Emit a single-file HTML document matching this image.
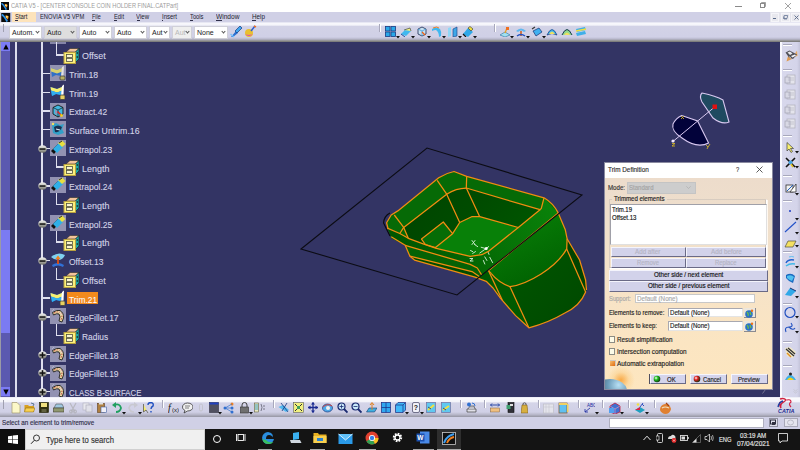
<!DOCTYPE html>
<html><head><meta charset="utf-8">
<style>
*{margin:0;padding:0;box-sizing:border-box}
html,body{width:800px;height:450px;overflow:hidden;background:#333464;font-family:"Liberation Sans",sans-serif}
.a{position:absolute}
.tt{color:#d4d4e8;font-size:9px;white-space:nowrap;line-height:12px;-webkit-text-stroke:0.1px #d4d4e8}
.mn{position:absolute;top:12px;font-size:7.8px;line-height:10px;color:#1a1a2a;white-space:nowrap}
.cb{position:absolute;top:26px;height:13px;background:#fff;border:1px solid #d0d0d8;font-size:7px;line-height:11px;padding-left:2px;color:#222;white-space:nowrap;overflow:hidden}
.cb i{position:absolute;right:2px;top:3px;width:3px;height:3px;border-right:0.8px solid #555;border-bottom:0.8px solid #555;transform:rotate(45deg)}
</style></head><body>
<svg width="0" height="0" style="position:absolute">
<defs>
<linearGradient id="gsil" x1="0" y1="0" x2="0" y2="1"><stop offset="0" stop-color="#f0f0f0"/><stop offset="0.5" stop-color="#b8b8b0"/><stop offset="1" stop-color="#707068"/></linearGradient>
<symbol id="i_expm" viewBox="0 0 9 8"><ellipse cx="4.5" cy="4" rx="4.2" ry="3.7" fill="url(#gsil)"/><rect x="1.5" y="3.3" width="6" height="1.5" fill="#111"/></symbol>
<symbol id="i_expp" viewBox="0 0 9 8"><ellipse cx="4.5" cy="4" rx="4.2" ry="3.7" fill="url(#gsil)"/><rect x="1.5" y="3.3" width="6" height="1.5" fill="#111"/><rect x="3.75" y="1.2" width="1.5" height="5.6" fill="#111"/></symbol>
<symbol id="i_param" viewBox="0 0 17 16"><path d="M3 4L7 0.5H16L12.5 4Z" fill="#f2c49a" stroke="#2a2a2a" stroke-width="0.6"/><path d="M12.5 4L16 0.5V11L12.5 14.5Z" fill="#1fa8a8" stroke="#1a1a1a" stroke-width="0.6"/><circle cx="14.3" cy="5" r="0.8" fill="#111"/><circle cx="14.3" cy="9" r="0.8" fill="#111"/><rect x="1" y="4.5" width="11.5" height="11" fill="#fbf07a" stroke="#b8a040" stroke-width="1"/><rect x="3.5" y="6.5" width="6" height="3" fill="#f8f4d0" stroke="#505040" stroke-width="0.8"/><rect x="3.5" y="10.5" width="6" height="3" fill="#f8f4d0" stroke="#505040" stroke-width="0.8"/></symbol>
<symbol id="i_trim" viewBox="0 0 16 16"><path d="M0.5 3L7 5L13 2.5L11 11L6 10L2 12Z" fill="#2070e0"/><path d="M0.5 3L7 5L13 2.5L12.5 6.5L7 8.5L1 6.5Z" fill="#f4ee70"/><path d="M1 6.5L7 8.5L12 7L11 11L6 10L2 12Z" fill="#30b0f0"/><path d="M12 2L14 0.5L13.5 11H11Z" fill="#fff"/><rect x="10" y="11" width="5" height="4.5" rx="1" fill="#e8d060" stroke="#404040" stroke-width="0.8"/></symbol>
<symbol id="i_trimg" viewBox="0 0 16 16"><rect width="16" height="16" fill="#9292b2"/><path d="M1 3L7 5L13 2.5L11 11L6 10L2 12Z" fill="#3070c8"/><path d="M1 3L7 5L13 2.5L12.5 6.5L7 8.5L1 6.5Z" fill="#d8d070"/><path d="M12 2L14 1L13.5 11H11Z" fill="#e0e0e0"/><rect x="10" y="11" width="5" height="4" rx="1" fill="#b8b060" stroke="#404040" stroke-width="0.8"/></symbol>
<symbol id="i_extract" viewBox="0 0 16 16"><rect width="16" height="16" fill="#9292b2"/><path d="M3 4.5L8 2L13 4.5V11L8 14L3 11Z" fill="#40b8e0" stroke="#1a1a1a" stroke-width="0.9"/><path d="M3 4.5L8 7L13 4.5M8 7V14" stroke="#1a1a1a" stroke-width="0.7" fill="none"/><path d="M5 6L7 8V12L5 10.5Z" fill="#9292b2"/><path d="M7.5 8.5L11 12" stroke="#e02020" stroke-width="1.6"/><circle cx="11.5" cy="12.5" r="1.4" fill="#f0d020"/></symbol>
<symbol id="i_untrim" viewBox="0 0 16 16"><rect width="16" height="16" fill="#9292b2"/><path d="M2 4L6 2L10 4L14 3L12 8L14 12L8 14L3 12Z" fill="#30a0c8"/><path d="M4 6Q8 3 12 6Q10 12 5 11Z" fill="#1a3050"/><circle cx="3" cy="3" r="1.2" fill="#f0e060"/><path d="M6 8L10 9" stroke="#e0f0ff" stroke-width="1.2"/></symbol>
<symbol id="i_extrap" viewBox="0 0 16 16"><rect width="16" height="16" fill="#9292b2"/><path d="M1 11L8 4L10 7L4 14Z" fill="#111"/><path d="M3 9L9 3L13 7L7 13Z" fill="#30b0e8"/><path d="M8 3L12 0.5L15.5 4L12 7Z" fill="#e8e040"/><path d="M9 3L12 1" stroke="#303030" stroke-width="1"/></symbol>
<symbol id="i_offset" viewBox="0 0 16 16"><path d="M1 5Q8 -1 15 3Q13 8 8 8Q4 8 1 5Z" fill="#80d0f0"/><path d="M2 13Q8 9 14 13L13 15Q8 12 3 15Z" fill="#3070d8"/><path d="M8 5V12" stroke="#e05010" stroke-width="1.8"/><path d="M5.5 7L8 3.5L10.5 7Z" fill="#f08020"/></symbol>
<symbol id="i_fillet" viewBox="0 0 16 16"><rect width="16" height="16" fill="#9292b2"/><path d="M2 3L4 1" stroke="#c8c8dc" stroke-width="0.6"/><path d="M2.5 4.5Q7 1.5 10 2.5Q14 5 13.5 10L12 14L9 13Q11 8 9 6Q7 5 3.5 7Z" fill="#e4d49c" stroke="#202020" stroke-width="0.9"/><path d="M4 5Q8 3 10.5 4.5Q13 7 11 12" stroke="#c02030" stroke-width="0.9" fill="none" stroke-dasharray="1.2 1.4"/><path d="M9.5 3.5L12 7" stroke="#f4f0f0" stroke-width="0.8"/></symbol>
</defs></svg>

<!-- title bar -->
<div class="a" style="left:0;top:0;width:800px;height:12px;background:#fff"></div>
<svg class="a" style="left:1px;top:2px" width="8" height="8" viewBox="0 0 9 9"><rect width="9" height="9" fill="#0a0a0a"/><path d="M0.5 1.5Q3 3 6 8.5" stroke="#2a90e8" stroke-width="1.8" fill="none"/><path d="M4 2.5Q6 2 7.5 3.5Q7 6 6 6.5Q5 4.5 4 2.5Z" fill="#f08a20"/><circle cx="5.5" cy="3.8" r="1.1" fill="#ffe070"/></svg>
<div class="a" style="left:11.3px;top:1.14px;font-size:6.9px;line-height:10px;color:#9c9c9c;white-space:nowrap;transform:scaleX(0.825);transform-origin:0 0">CATIA V5 - [CENTER CONSOLE COIN HOLDER FINAL.CATPart]</div>
<div class="a" style="left:735px;top:5.5px;width:7px;height:0.8px;background:#8a8a8a"></div>
<div class="a" style="left:760px;top:3px;width:5px;height:5px;border:0.8px solid #8a8a8a;box-shadow:1px -1px 0 -0.2px #8a8a8a"></div>
<svg class="a" style="left:784px;top:2px" width="8" height="8" viewBox="0 0 8 8"><path d="M1 1L7 7M7 1L1 7" stroke="#8a8a8a" stroke-width="0.8"/></svg>
<!-- menu bar -->
<div class="a" style="left:0;top:12px;width:800px;height:10px;background:#d0d0e6"></div>
<svg class="a" style="left:1px;top:12.5px" width="9.5" height="9" viewBox="0 0 9 9"><rect width="9" height="9" fill="#0a0a0a"/><path d="M0.5 1.5Q3 3 6 8.5" stroke="#2a90e8" stroke-width="1.8" fill="none"/><path d="M4 2.5Q6 2 7.5 3.5Q7 6 6 6.5Q5 4.5 4 2.5Z" fill="#f08a20"/><circle cx="5.5" cy="3.8" r="1.1" fill="#ffe070"/></svg>
<div class="a" style="left:12px;top:12px;width:24px;height:10px;background:#fde3bb"></div>
<div class="a" style="left:14.5px;top:12.39px;font-size:6.9px;line-height:10px;color:#1c1c30;white-space:nowrap;transform:scaleX(0.858);transform-origin:0 0">Start</div>
<div class="a" style="left:39.7px;top:12.39px;font-size:6.9px;line-height:10px;color:#1c1c30;white-space:nowrap;transform:scaleX(0.837);transform-origin:0 0">ENOVIA V5 VPM</div>
<div class="a" style="left:91.9px;top:12.39px;font-size:6.9px;line-height:10px;color:#1c1c30;white-space:nowrap;transform:scaleX(0.783);transform-origin:0 0">File</div>
<div class="a" style="left:113.75px;top:12.39px;font-size:6.9px;line-height:10px;color:#1c1c30;white-space:nowrap;transform:scaleX(0.841);transform-origin:0 0">Edit</div>
<div class="a" style="left:136.25px;top:12.39px;font-size:6.9px;line-height:10px;color:#1c1c30;white-space:nowrap;transform:scaleX(0.883);transform-origin:0 0">View</div>
<div class="a" style="left:161.9px;top:12.39px;font-size:6.9px;line-height:10px;color:#1c1c30;white-space:nowrap;transform:scaleX(0.869);transform-origin:0 0">Insert</div>
<div class="a" style="left:189.5px;top:12.39px;font-size:6.9px;line-height:10px;color:#1c1c30;white-space:nowrap;transform:scaleX(0.838);transform-origin:0 0">Tools</div>
<div class="a" style="left:216px;top:12.39px;font-size:6.9px;line-height:10px;color:#1c1c30;white-space:nowrap;transform:scaleX(0.958);transform-origin:0 0">Window</div>
<div class="a" style="left:252px;top:12.39px;font-size:6.9px;line-height:10px;color:#1c1c30;white-space:nowrap;transform:scaleX(0.916);transform-origin:0 0">Help</div>
<div class="a" style="left:770px;top:12px;width:30px;height:10px;background:#e4e4ec"></div>
<div class="a" style="left:770.5px;top:13px;width:8.5px;height:8.5px;background:#e8e8ee;border:0.5px solid #f4f4f8"></div>
<div class="a" style="left:781px;top:13px;width:8.5px;height:8.5px;background:#e8e8ee;border:0.5px solid #f4f4f8"></div>
<div class="a" style="left:791px;top:13px;width:9px;height:8.5px;background:#e8e8ee;border:0.5px solid #f4f4f8"></div>
<div class="a" style="left:773px;top:18px;width:3px;height:1.2px;background:#5a6a88"></div>
<svg class="a" style="left:782.5px;top:14px" width="6" height="6" viewBox="0 0 6 6"><path d="M1.5 1.5H5V4.5H1.5Z" fill="none" stroke="#6a7a98" stroke-width="0.8" transform="skewX(-12)"/><path d="M1 2.5V5H4" fill="none" stroke="#6a7a98" stroke-width="0.8"/></svg>
<svg class="a" style="left:793.5px;top:15px" width="5" height="5" viewBox="0 0 5 5"><path d="M0.5 0.5L4.5 4.5M4.5 0.5L0.5 4.5" stroke="#5a6a88" stroke-width="0.9"/></svg>
<div class="a" style="left:14.8px;top:20.2px;width:3px;height:0.7px;background:#30304a"></div>
<div class="a" style="left:92px;top:20.2px;width:2.8px;height:0.7px;background:#30304a"></div>
<div class="a" style="left:114px;top:20.2px;width:3px;height:0.7px;background:#30304a"></div>
<div class="a" style="left:136.5px;top:20.2px;width:3.5px;height:0.7px;background:#30304a"></div>
<div class="a" style="left:162px;top:20.2px;width:1.2px;height:0.7px;background:#30304a"></div>
<div class="a" style="left:189.5px;top:20.2px;width:3.5px;height:0.7px;background:#30304a"></div>
<div class="a" style="left:216px;top:20.2px;width:5.5px;height:0.7px;background:#30304a"></div>
<div class="a" style="left:252px;top:20.2px;width:3.5px;height:0.7px;background:#30304a"></div>
<!-- toolbar -->
<div class="a" style="left:0;top:22px;width:800px;height:20px;background:linear-gradient(#d6d6ea 0,#f8f8fc 1px,#f4f4fa 3px,#d2d2e6 4.5px,#d0d0e6 15px,#b8b8cc 17px,#8c8c8a 19px,#707070 20px)"></div>

<div class="a" style="left:3px;top:24px;width:1px;height:8px;background:#a0a0b0"></div>
<div class="cb" style="left:9px;width:33px">Autom.<i></i></div>
<div class="cb" style="left:44px;width:33px;background:#dedede">Auto<i></i></div>
<div class="cb" style="left:79px;width:33px">Auto<i></i></div>
<div class="cb" style="left:114px;width:33px">Auto<i></i></div>
<div class="cb" style="left:149px;width:21px">Aut<i></i></div>
<div class="cb" style="left:172px;width:20px;background:#efefef;color:#b8b8b8">Aut<i></i></div>
<div class="cb" style="left:194px;width:34px">None<i></i></div>

<!-- tree -->
<div class="a" style="left:0;top:41px;width:1px;height:356px;background:#9a9aa6"></div>
<div class="a" style="left:1px;top:41px;width:9px;height:356px;background:#5b59b0"></div>
<div class="a" style="left:1px;top:230px;width:9px;height:103px;background:#7b7bf2"></div>
<div class="a" style="left:1px;top:42px;width:9px;height:9px;background:#7b7bf5"></div>
<svg class="a" style="left:3px;top:44px" width="6" height="6" viewBox="0 0 6 6"><path d="M3 0.3L5.7 5.5H0.3Z" fill="#000"/></svg>
<div class="a" style="left:1px;top:387px;width:9px;height:9px;background:#7b7bf5"></div>
<svg class="a" style="left:3px;top:389px" width="6" height="6" viewBox="0 0 6 6"><path d="M3 5.7L5.7 0.5H0.3Z" fill="#000"/></svg>
<div class="a" style="left:10px;top:41px;width:5px;height:356px;background:#38376c"></div>
<div class="a" style="left:15px;top:41px;width:1.5px;height:356px;background:#dcdcec"></div>
<div class="a" style="left:50px;top:41px;width:16px;height:2.5px;background:#9a9ab8;opacity:0.8"></div>
<div class="a" style="left:41px;top:41px;width:2px;height:356px;background:#dedeee"></div>
<div class="a" style="left:55.5px;top:41.0px;width:1.5px;height:13.9px;background:#dedeee"></div>
<div class="a" style="left:55.5px;top:54.1px;width:9px;height:1.5px;background:#dedeee"></div>
<svg class="a" style="left:63px;top:47.5px" width="17" height="16"><use href="#i_param"/></svg>
<div class="a tt" style="left:82px;top:50.3px;transform:scaleX(0.990);transform-origin:0 0;">Offset</div>
<div class="a" style="left:43px;top:72.8px;width:7px;height:1.5px;background:#dedeee"></div>
<svg class="a" style="left:50px;top:65.1px" width="16" height="16"><use href="#i_trimg"/></svg>
<div class="a tt" style="left:68.8px;top:69.0px;transform:scaleX(0.968);transform-origin:0 0;">Trim.18</div>
<div class="a" style="left:43px;top:91.5px;width:7px;height:1.5px;background:#dedeee"></div>
<svg class="a" style="left:50px;top:83.8px" width="16" height="16"><use href="#i_trim"/></svg>
<div class="a tt" style="left:68.8px;top:87.7px;transform:scaleX(0.968);transform-origin:0 0;">Trim.19</div>
<div class="a" style="left:43px;top:110.2px;width:7px;height:1.5px;background:#dedeee"></div>
<svg class="a" style="left:50px;top:102.5px" width="16" height="16"><use href="#i_extract"/></svg>
<div class="a tt" style="left:68.8px;top:106.4px;transform:scaleX(0.940);transform-origin:0 0;">Extract.42</div>
<div class="a" style="left:43px;top:128.9px;width:7px;height:1.5px;background:#dedeee"></div>
<svg class="a" style="left:50px;top:121.2px" width="16" height="16"><use href="#i_untrim"/></svg>
<div class="a tt" style="left:68.8px;top:125.1px;transform:scaleX(0.973);transform-origin:0 0;">Surface Untrim.16</div>
<div class="a" style="left:43px;top:147.6px;width:7px;height:1.5px;background:#dedeee"></div>
<svg class="a" style="left:50px;top:139.9px" width="16" height="16"><use href="#i_extrap"/></svg>
<div class="a tt" style="left:68.8px;top:143.8px;transform:scaleX(0.952);transform-origin:0 0;">Extrapol.23</div>
<svg class="a" style="left:38px;top:144.6px" width="9" height="8"><use href="#i_expm"/></svg>
<div class="a" style="left:55.5px;top:155.9px;width:1.5px;height:11.2px;background:#dedeee"></div>
<div class="a" style="left:55.5px;top:166.3px;width:9px;height:1.5px;background:#dedeee"></div>
<svg class="a" style="left:63px;top:159.7px" width="17" height="16"><use href="#i_param"/></svg>
<div class="a tt" style="left:82px;top:162.5px;transform:scaleX(0.994);transform-origin:0 0;">Length</div>
<div class="a" style="left:43px;top:185.1px;width:7px;height:1.5px;background:#dedeee"></div>
<svg class="a" style="left:50px;top:177.4px" width="16" height="16"><use href="#i_extrap"/></svg>
<div class="a tt" style="left:68.8px;top:181.3px;transform:scaleX(0.952);transform-origin:0 0;">Extrapol.24</div>
<svg class="a" style="left:38px;top:182.1px" width="9" height="8"><use href="#i_expm"/></svg>
<div class="a" style="left:55.5px;top:193.4px;width:1.5px;height:11.2px;background:#dedeee"></div>
<div class="a" style="left:55.5px;top:203.8px;width:9px;height:1.5px;background:#dedeee"></div>
<svg class="a" style="left:63px;top:197.2px" width="17" height="16"><use href="#i_param"/></svg>
<div class="a tt" style="left:82px;top:200.0px;transform:scaleX(0.994);transform-origin:0 0;">Length</div>
<div class="a" style="left:43px;top:222.5px;width:7px;height:1.5px;background:#dedeee"></div>
<svg class="a" style="left:50px;top:214.8px" width="16" height="16"><use href="#i_extrap"/></svg>
<div class="a tt" style="left:68.8px;top:218.7px;transform:scaleX(0.952);transform-origin:0 0;">Extrapol.25</div>
<svg class="a" style="left:38px;top:219.5px" width="9" height="8"><use href="#i_expm"/></svg>
<div class="a" style="left:55.5px;top:230.8px;width:1.5px;height:11.2px;background:#dedeee"></div>
<div class="a" style="left:55.5px;top:241.2px;width:9px;height:1.5px;background:#dedeee"></div>
<svg class="a" style="left:63px;top:234.6px" width="17" height="16"><use href="#i_param"/></svg>
<div class="a tt" style="left:82px;top:237.4px;transform:scaleX(0.994);transform-origin:0 0;">Length</div>
<div class="a" style="left:43px;top:259.9px;width:7px;height:1.5px;background:#dedeee"></div>
<svg class="a" style="left:50px;top:252.2px" width="16" height="16"><use href="#i_offset"/></svg>
<div class="a tt" style="left:68.8px;top:256.1px;transform:scaleX(0.945);transform-origin:0 0;">Offset.13</div>
<svg class="a" style="left:38px;top:256.9px" width="9" height="8"><use href="#i_expm"/></svg>
<div class="a" style="left:55.5px;top:268.2px;width:1.5px;height:11.2px;background:#dedeee"></div>
<div class="a" style="left:55.5px;top:278.6px;width:9px;height:1.5px;background:#dedeee"></div>
<svg class="a" style="left:63px;top:272.0px" width="17" height="16"><use href="#i_param"/></svg>
<div class="a tt" style="left:82px;top:274.8px;transform:scaleX(0.990);transform-origin:0 0;">Offset</div>
<div class="a" style="left:43px;top:297.3px;width:7px;height:1.5px;background:#dedeee"></div>
<svg class="a" style="left:50px;top:289.6px" width="16" height="16"><use href="#i_trim"/></svg>
<div class="a" style="left:67px;top:292.1px;width:31px;height:12px;background:#f28a1c"></div>
<div class="a tt" style="left:68.8px;top:293.5px;color:#fff;transform:scaleX(0.931);transform-origin:0 0;">Trim.21</div>
<div class="a" style="left:43px;top:316.1px;width:7px;height:1.5px;background:#dedeee"></div>
<svg class="a" style="left:50px;top:308.4px" width="16" height="16"><use href="#i_fillet"/></svg>
<div class="a tt" style="left:68.8px;top:312.3px;transform:scaleX(0.944);transform-origin:0 0;">EdgeFillet.17</div>
<svg class="a" style="left:38px;top:313.1px" width="9" height="8"><use href="#i_expm"/></svg>
<div class="a" style="left:55.5px;top:324.4px;width:1.5px;height:11.2px;background:#dedeee"></div>
<div class="a" style="left:55.5px;top:334.8px;width:9px;height:1.5px;background:#dedeee"></div>
<svg class="a" style="left:63px;top:328.2px" width="17" height="16"><use href="#i_param"/></svg>
<div class="a tt" style="left:82px;top:331.0px;transform:scaleX(0.932);transform-origin:0 0;">Radius</div>
<div class="a" style="left:43px;top:353.5px;width:7px;height:1.5px;background:#dedeee"></div>
<svg class="a" style="left:50px;top:345.8px" width="16" height="16"><use href="#i_fillet"/></svg>
<div class="a tt" style="left:68.8px;top:349.7px;transform:scaleX(0.944);transform-origin:0 0;">EdgeFillet.18</div>
<svg class="a" style="left:38px;top:350.5px" width="9" height="8"><use href="#i_expp"/></svg>
<div class="a" style="left:43px;top:372.2px;width:7px;height:1.5px;background:#dedeee"></div>
<svg class="a" style="left:50px;top:364.5px" width="16" height="16"><use href="#i_fillet"/></svg>
<div class="a tt" style="left:68.8px;top:368.4px;transform:scaleX(0.944);transform-origin:0 0;">EdgeFillet.19</div>
<svg class="a" style="left:38px;top:369.2px" width="9" height="8"><use href="#i_expp"/></svg>
<div class="a" style="left:43px;top:390.9px;width:7px;height:1.5px;background:#dedeee"></div>
<svg class="a" style="left:50px;top:383.2px" width="16" height="16"><use href="#i_fillet"/></svg>
<div class="a tt" style="left:68.8px;top:387.1px;transform:scaleX(0.866);transform-origin:0 0;">CLASS B-SURFACE</div>
<svg class="a" style="left:38px;top:387.9px" width="9" height="8"><use href="#i_expp"/></svg>
<!-- viewport 3D -->
<svg class="a" style="left:0;top:0" width="800" height="450" viewBox="0 0 800 450">
<defs>
<linearGradient id="gneck" x1="0.3" y1="0" x2="0.8" y2="1"><stop offset="0" stop-color="#088008"/><stop offset="1" stop-color="#005e00"/></linearGradient>
<linearGradient id="gfront" x1="0" y1="0" x2="1" y2="1"><stop offset="0" stop-color="#005600"/><stop offset="1" stop-color="#004800"/></linearGradient>
<linearGradient id="grim" x1="1" y1="0" x2="0" y2="0.3"><stop offset="0" stop-color="#0a840a"/><stop offset="0.5" stop-color="#067006"/><stop offset="1" stop-color="#005600"/></linearGradient>
<linearGradient id="gwall" x1="0" y1="0" x2="1" y2="0.3"><stop offset="0" stop-color="#004400"/><stop offset="0.6" stop-color="#004c00"/><stop offset="1" stop-color="#005400"/></linearGradient>
</defs>
<!-- silhouette base (rim top color) -->
<path d="M388.1 229L386.6 222.8L391.2 215L397.8 210.9L438.7 177.8Q446 173 454 171.5L466.7 176.3L544 197.8Q553 203 558.2 212.9L565.3 229.8L567.1 238.7L579.6 260L585.6 280L586.5 290Q580 306 564.4 313.3Q548 323 528.9 327.8L515.6 315.6L500.4 298.2L493 288L486.2 281.3L475 277.2L414.5 260.1L409.9 256.2L405.2 245.3L391.2 238.3Z" fill="#066a06"/>
<!-- inner walls -->
<path d="M403.7 227.4L446.7 194.2Q456 188 466.3 188L540 209.7L518.3 227.5L479.7 216.7L471.7 216.7L459.7 222.5L452.6 233.7L443.3 222L421.5 239.1L425.4 244.5L408.3 238.3Z" fill="url(#gwall)"/>
<!-- floor -->
<path d="M452.6 233.7L459.7 222.5L471.7 216.7L479.7 216.7L518.3 227.5L488.9 251.1L481.8 254.7L470.2 256.4L436.3 248.4L435.5 247.6Z" fill="#088008"/>
<!-- step -->
<path d="M443.3 222L452.6 233.7L435.5 247.6L425.4 244.5L421.5 239.1Z" fill="#066c06"/>
<!-- front rim band a-b -->
<path d="M387.3 228.2L399.8 233.5L408.3 238.3L423.1 243.8L436.3 248.4L470.2 256.4L481.8 254.7L488.9 251.1L518.3 227.5L540 209.7L541.3 208.4L544 197.8L558.2 212.9L488.3 270.8L481.8 275.1L477.3 268L470.2 264.4L405.2 245.3L391.2 236.8Z" fill="url(#grim)"/>
<!-- band b-c -->
<path d="M391.2 236.8L405.2 245.3L470.2 264.4L477.3 268L481.8 275.1L480 276.9L472 271.6L409.9 256.2L405.2 245.3Z" fill="#056205"/>
<!-- band c-d -->
<path d="M409.9 256.2L472 271.6L480 276.9L486.2 281.3L475 277.2L414.5 260.1Z" fill="#004c00"/>
<!-- neck top -->
<path d="M558.2 212.9L565.3 229.8L567.1 238.7L566.7 248.9Q562 258 551.1 268.9Q533 280 510 286.7Q498 282 491.1 273.3L488.3 270.8Z" fill="url(#gneck)"/>
<!-- neck left face -->
<path d="M491.1 273.3Q498 282 510 286.7L528.9 327.8L515.6 315.6L500.4 298.2L493 288L486.2 281.3L480 276.9L481.8 275.1L488.3 270.8Z" fill="#005a00"/>
<!-- front face -->
<path d="M510 286.7C528 284 556 268 566.7 248.9L585.6 292Q580 306 564.4 313.3Q548 323 528.9 327.8Z" fill="url(#gfront)"/>
<!-- right side face -->
<path d="M566.7 248.9L567.1 238.7L579.6 260L585.6 280L586.5 290L585.6 292Z" fill="#004400"/>
<!-- edges -->
<g fill="none" stroke="#f28c12" stroke-width="1.25" stroke-linejoin="round">
<path d="M388.1 229L386.6 222.8L391.2 215L397.8 210.9L438.7 177.8Q446 173 454 171.5L466.7 176.3L544 197.8Q553 203 558.2 212.9L565.3 229.8L567.1 238.7L566.7 248.9"/>
<path d="M566.7 248.9L585.6 292Q580 306 564.4 313.3Q548 323 528.9 327.8L515.6 315.6L500.4 298.2L493 288L486.2 281.3L475 277.2L414.5 260.1L409.9 256.2L405.2 245.3L391.2 236.8"/>
<path d="M466.7 176.3L466.3 188L479.7 216.7"/>
<path d="M437.2 180.4L446.7 194.2L459.7 222.5"/>
<path d="M394.3 215L403.7 227.4L408.3 238.3"/>
<path d="M399.8 233.5L403.7 227.4L446.7 194.2Q456 188 466.3 188L540 209.7L541.3 208.4L544 197.8"/>
<path d="M452.6 233.7L459.7 222.5L471.7 216.7L479.7 216.7L518.3 227.5L540 209.7"/>
<path d="M558.2 212.9L488.3 270.8L491.1 273.3"/>
<path d="M387.3 228.2L399.8 233.5L408.3 238.3L423.1 243.8L436.3 248.4L470.2 256.4L481.8 254.7L488.9 251.1L518.3 227.5"/>
<path d="M443.3 222L452.6 233.7L435.5 247.6L425.4 244.5L421.5 239.1Z"/>
<path d="M405.2 245.3L470.2 264.4L477.3 268L481.8 275.1"/>
<path d="M409.9 256.2L472 271.6L480 276.9"/>
<path d="M491.1 273.3Q498 282 510 286.7C528 284 556 268 566.7 248.9"/>
<path d="M510 286.7L528.9 327.8"/>
<path d="M488.9 271.6L502.2 300"/>
<path d="M567.1 238.7L579.6 260L585.6 280L586.5 290"/>
</g>
<!-- dark lip left -->
<path d="M390 213Q384 216 383.6 223L387 230L390 236" fill="none" stroke="#0a0a10" stroke-width="1.2"/>
<!-- plane -->
<path d="M301 249L427 148L582 195L457 295Z" fill="none" stroke="#0c0c14" stroke-width="1.1"/>
<!-- axis glyph -->
<g stroke="#d8f0d8" stroke-width="0.9" fill="none" stroke-linecap="round">
<path d="M472 240.5L475 244.5M475 240.5L472 244.5"/><path d="M474.5 244.5L477.7 246.6"/>
<path d="M481.2 247.3L486 248.6L488.7 246.6"/><path d="M486 248.6L479.8 253"/>
<path d="M470.5 250.5L472.7 251.6"/><path d="M472.7 253.4L475.5 251.6"/>
<path d="M470 258.5H473L470 261H473"/>
<path d="M484.8 256.9L486.9 260.5M489.8 257.3L492.6 262.6M483.4 260.5L484.8 264M488.3 252.6L489 254.4"/>
</g>
<circle cx="486.2" cy="248.6" r="1.5" fill="#fff"/>
<!-- compass -->
<path d="M702 93Q716 96 723 100L729 122Q722 125 713 118L702 102Q699 96 702 93Z" fill="#1f4a60" stroke="#d8c8f0" stroke-width="1.1"/>
<path d="M681.7 115.5L697.6 121L708.6 143Q697 149 682 138Q671 131 673 124Q676 118 681.7 115.5Z" fill="#02023a" stroke="#d8c8f0" stroke-width="1.1"/>
<path d="M673.5 141L714.6 107" stroke="#d8c8f0" stroke-width="1" fill="none"/>
<rect x="712.5" y="104.5" width="4.5" height="4.5" fill="#e01010"/>
<circle cx="673" cy="141" r="1.6" fill="#f0e8ff"/>
<g stroke="#e0c020" stroke-width="0.8" fill="none"><path d="M681 116L684 119M684 116L681 119"/><path d="M706 145L708 147L710 144M708 147L707 149"/><path d="M672 143.5H675L672 146H675"/></g>
</svg>

<!-- dialog -->
<div class="a" style="left:603.5px;top:161.5px;width:169px;height:228px;border:1px solid #8a8aa0;background:linear-gradient(#ecdbcb 0px,#efdfcc 60px,#f6e3c8 120px,#fbe5c2 180px,#fde6bf 228px)"></div>
<div class="a" style="left:604.5px;top:162.5px;width:167px;height:15px;background:#fff"></div>
<div class="a" style="left:608.2px;top:164.82px;font-size:6.6px;line-height:10px;color:#333;white-space:nowrap;-webkit-text-stroke:0.15px #333;transform:scaleX(0.965);transform-origin:0 0;">Trim Definition</div>
<div class="a" style="left:735.5px;top:164.82px;font-size:6.6px;line-height:10px;color:#333;white-space:nowrap;-webkit-text-stroke:0.15px #333;transform:scaleX(0.872);transform-origin:0 0;">?</div>
<svg class="a" style="left:756px;top:166px" width="7" height="7" viewBox="0 0 7 7"><path d="M0.5 0.5L6.5 6.5M6.5 0.5L0.5 6.5" stroke="#333" stroke-width="0.8"/></svg>
<div class="a" style="left:608.2px;top:183.32px;font-size:6.6px;line-height:10px;color:#333;white-space:nowrap;-webkit-text-stroke:0.15px #333;transform:scaleX(0.932);transform-origin:0 0;">Mode:</div>
<div class="a" style="left:627px;top:182px;width:68.5px;height:11.5px;background:#cdcdcd;border:0.5px solid #c4c4c4"></div>
<div class="a" style="left:629.3px;top:183.32px;font-size:6.6px;line-height:10px;color:#a4a4a4;white-space:nowrap;-webkit-text-stroke:0.15px #a4a4a4;transform:scaleX(0.915);transform-origin:0 0;">Standard</div>
<svg class="a" style="left:686px;top:186px" width="5" height="3" viewBox="0 0 5 3"><path d="M0.3 0.3L2.5 2.5L4.7 0.3" stroke="#aaa" stroke-width="0.6" fill="none"/></svg>
<div class="a" style="left:608.5px;top:198.5px;width:158.5px;height:70px;border:1px solid #d8ccc0;border-right-color:#fff;border-bottom-color:#fff;box-shadow:inset -1px -1px 0 #d0c4b8,1px 1px 0 #fff8f0"></div>
<div class="a" style="left:612px;top:195px;width:55px;height:7px;background:#eedecc"></div>
<div class="a" style="left:614.4px;top:193.62px;font-size:6.6px;line-height:10px;color:#222;white-space:nowrap;-webkit-text-stroke:0.15px #222;transform:scaleX(0.928);transform-origin:0 0;">Trimmed elements</div>
<div class="a" style="left:609.5px;top:204px;width:157px;height:41px;background:#fff;border:1px solid #a0a0a8;border-right-color:#e0e0e0;border-bottom-color:#e0e0e0"></div>
<div class="a" style="left:611.6px;top:204.72px;font-size:6.6px;line-height:10px;color:#111;white-space:nowrap;-webkit-text-stroke:0.15px #111;transform:scaleX(0.904);transform-origin:0 0;">Trim.19</div>
<div class="a" style="left:611.6px;top:212.52px;font-size:6.6px;line-height:10px;color:#111;white-space:nowrap;-webkit-text-stroke:0.15px #111;transform:scaleX(0.915);transform-origin:0 0;">Offset.13</div>
<div class="a" style="left:610.5px;top:246.5px;width:75px;height:10.5px;background:#d2d2ea;border:1px solid #f4f4fc;border-right:1.5px solid #6a6a86;border-bottom:1.5px solid #6a6a86"></div><div class="a" style="left:635.3px;top:247.12px;font-size:6.6px;line-height:10px;color:#b4b4c4;white-space:nowrap;-webkit-text-stroke:0.15px #b4b4c4;transform:scaleX(0.948);transform-origin:0 0;">Add after</div>
<div class="a" style="left:686px;top:246.5px;width:80px;height:10.5px;background:#d2d2ea;border:1px solid #f4f4fc;border-right:1.5px solid #6a6a86;border-bottom:1.5px solid #6a6a86"></div><div class="a" style="left:710.5px;top:247.12px;font-size:6.6px;line-height:10px;color:#b4b4c4;white-space:nowrap;-webkit-text-stroke:0.15px #b4b4c4;transform:scaleX(0.957);transform-origin:0 0;">Add before</div>
<div class="a" style="left:610.5px;top:257.8px;width:75px;height:10.5px;background:#d2d2ea;border:1px solid #f4f4fc;border-right:1.5px solid #6a6a86;border-bottom:1.5px solid #6a6a86"></div><div class="a" style="left:637.0px;top:257.52px;font-size:6.6px;line-height:10px;color:#b4b4c4;white-space:nowrap;-webkit-text-stroke:0.15px #b4b4c4;transform:scaleX(0.895);transform-origin:0 0;">Remove</div>
<div class="a" style="left:686px;top:257.8px;width:80px;height:10.5px;background:#d2d2ea;border:1px solid #f4f4fc;border-right:1.5px solid #6a6a86;border-bottom:1.5px solid #6a6a86"></div><div class="a" style="left:715.3px;top:257.52px;font-size:6.6px;line-height:10px;color:#b4b4c4;white-space:nowrap;-webkit-text-stroke:0.15px #b4b4c4;transform:scaleX(0.884);transform-origin:0 0;">Replace</div>
<div class="a" style="left:609.3px;top:270px;width:158.5px;height:10.5px;background:#d2d2ea;border:1px solid #f4f4fc;border-right:1.5px solid #6a6a86;border-bottom:1.5px solid #6a6a86"></div><div class="a" style="left:653.8px;top:269.92px;font-size:6.6px;line-height:10px;color:#111;white-space:nowrap;-webkit-text-stroke:0.15px #111;transform:scaleX(0.941);transform-origin:0 0;">Other side / next element</div>
<div class="a" style="left:609.3px;top:281.3px;width:158.5px;height:10.5px;background:#d2d2ea;border:1px solid #f4f4fc;border-right:1.5px solid #6a6a86;border-bottom:1.5px solid #6a6a86"></div><div class="a" style="left:647.8px;top:280.82px;font-size:6.6px;line-height:10px;color:#111;white-space:nowrap;-webkit-text-stroke:0.15px #111;transform:scaleX(0.947);transform-origin:0 0;">Other side / previous element</div>
<div class="a" style="left:609.3px;top:293.52px;font-size:6.6px;line-height:10px;color:#a8a8a8;white-space:nowrap;-webkit-text-stroke:0.15px #a8a8a8;transform:scaleX(0.882);transform-origin:0 0;">Support:</div>
<div class="a" style="left:635.3px;top:293.8px;width:120px;height:9.6px;background:#fff;border:1px solid #c8c8c8"></div>
<div class="a" style="left:637.3px;top:293.52px;font-size:6.6px;line-height:10px;color:#a8a8a8;white-space:nowrap;-webkit-text-stroke:0.15px #a8a8a8;transform:scaleX(0.948);transform-origin:0 0;">Default (None)</div>
<div class="a" style="left:609.3px;top:307.52px;font-size:6.6px;line-height:10px;color:#222;white-space:nowrap;-webkit-text-stroke:0.15px #222;transform:scaleX(0.915);transform-origin:0 0;">Elements to remove:</div>
<div class="a" style="left:668.2px;top:307.7px;width:75px;height:9.8px;background:#fff;border:1px solid #a8a8b0;border-right-color:#e4e4e4;border-bottom-color:#e4e4e4"></div>
<div class="a" style="left:670px;top:307.52px;font-size:6.6px;line-height:10px;color:#222;white-space:nowrap;-webkit-text-stroke:0.15px #222;transform:scaleX(0.920);transform-origin:0 0;">Default (None)</div>
<div class="a" style="left:609.3px;top:320.82px;font-size:6.6px;line-height:10px;color:#222;white-space:nowrap;-webkit-text-stroke:0.15px #222;transform:scaleX(0.909);transform-origin:0 0;">Elements to keep:</div>
<div class="a" style="left:668.2px;top:321.3px;width:75px;height:9.8px;background:#fff;border:1px solid #a8a8b0;border-right-color:#e4e4e4;border-bottom-color:#e4e4e4"></div>
<div class="a" style="left:670px;top:321.12px;font-size:6.6px;line-height:10px;color:#222;white-space:nowrap;-webkit-text-stroke:0.15px #222;transform:scaleX(0.920);transform-origin:0 0;">Default (None)</div>
<div class="a" style="left:743.5px;top:307.7px;width:12px;height:10.5px;background:#ece6dc;border-right:1px solid #8a8a90;border-bottom:1px solid #8a8a90"></div>
<svg class="a" style="left:744px;top:308.7px" width="10" height="9" viewBox="0 0 10 9"><circle cx="5" cy="5" r="3.8" fill="#2a70c8"/><path d="M3 3Q5 5 4 7M6 3L7 6" stroke="#70c040" stroke-width="1.2" fill="none"/><circle cx="8" cy="1.8" r="1.2" fill="#f07010"/></svg>
<div class="a" style="left:743.5px;top:321.3px;width:12px;height:10.5px;background:#ece6dc;border-right:1px solid #8a8a90;border-bottom:1px solid #8a8a90"></div>
<svg class="a" style="left:744px;top:322.3px" width="10" height="9" viewBox="0 0 10 9"><circle cx="5" cy="5" r="3.8" fill="#2a70c8"/><path d="M3 3Q5 5 4 7M6 3L7 6" stroke="#70c040" stroke-width="1.2" fill="none"/><circle cx="8" cy="1.8" r="1.2" fill="#f07010"/></svg>
<div class="a" style="left:609.3px;top:336px;width:6.2px;height:6.6px;background:#fdfbe8;border:0.7px solid #8c8c84"></div>
<div class="a" style="left:617.3px;top:334.82px;font-size:6.6px;line-height:10px;color:#222;white-space:nowrap;-webkit-text-stroke:0.15px #222;transform:scaleX(0.953);transform-origin:0 0;">Result simplification</div>
<div class="a" style="left:609.3px;top:348.3px;width:6.2px;height:6.6px;background:#fdfbe8;border:0.7px solid #8c8c84"></div>
<div class="a" style="left:617.3px;top:347.12px;font-size:6.6px;line-height:10px;color:#222;white-space:nowrap;-webkit-text-stroke:0.15px #222;transform:scaleX(0.969);transform-origin:0 0;">Intersection computation</div>
<div class="a" style="left:609.5px;top:360.3px;width:6px;height:6px;background:#fff4e4;border:0.5px solid #d0c8c0"></div>
<div class="a" style="left:610.3px;top:361.1px;width:4.5px;height:4.5px;background:linear-gradient(135deg,#f8c070,#e06a10)"></div>
<div class="a" style="left:617.3px;top:359.12px;font-size:6.6px;line-height:10px;color:#222;white-space:nowrap;-webkit-text-stroke:0.15px #222;transform:scaleX(0.973);transform-origin:0 0;">Automatic extrapolation</div>
<div class="a" style="left:604.5px;top:362px;width:40px;height:26.5px;overflow:hidden"><div style="position:absolute;left:2px;top:4px;width:28px;height:28px;border-radius:50%;background:radial-gradient(circle at 50% 50%,rgba(248,160,50,0.85) 0,rgba(250,200,120,0.4) 40%,rgba(250,220,160,0) 70%)"></div><div style="position:absolute;left:-12px;top:17px;width:34px;height:24px;border-radius:50%;background:radial-gradient(circle at 75% 25%,#b8e0f4 0,#6a9ab8 35%,#4a5058 75%)"></div></div>
<div class="a" style="left:649.3px;top:373.7px;width:37px;height:10.8px;border:1px solid #505060"></div>
<div class="a" style="left:650px;top:373.7px;width:36px;height:10.8px;background:#d4d4ec;border:1px solid #f6f6fc;border-right:1.5px solid #6a6a86;border-bottom:1.5px solid #6a6a86"></div><svg class="a" style="left:652.5px;top:375px" width="8" height="8" viewBox="0 0 8 8"><defs><radialGradient id="rb650" cx="0.35" cy="0.35" r="0.7"><stop offset="0" stop-color="#fff"/><stop offset="0.4" stop-color="#20c020"/><stop offset="1" stop-color="#103010"/></radialGradient></defs><circle cx="4" cy="4" r="3.3" fill="url(#rb650)"/></svg><div class="a" style="left:667.3px;top:374.92px;font-size:6.6px;line-height:10px;color:#222;white-space:nowrap;-webkit-text-stroke:0.15px #222;transform:scaleX(0.912);transform-origin:0 0;">OK</div>
<div class="a" style="left:690.4px;top:373.7px;width:36.6px;height:10.8px;background:#d4d4ec;border:1px solid #f6f6fc;border-right:1.5px solid #6a6a86;border-bottom:1.5px solid #6a6a86"></div><svg class="a" style="left:692.9px;top:375px" width="8" height="8" viewBox="0 0 8 8"><defs><radialGradient id="rb690" cx="0.35" cy="0.35" r="0.7"><stop offset="0" stop-color="#fff"/><stop offset="0.4" stop-color="#e02020"/><stop offset="1" stop-color="#103010"/></radialGradient></defs><circle cx="4" cy="4" r="3.3" fill="url(#rb690)"/></svg><div class="a" style="left:702.9px;top:374.92px;font-size:6.6px;line-height:10px;color:#222;white-space:nowrap;-webkit-text-stroke:0.15px #222;transform:scaleX(0.881);transform-origin:0 0;">Cancel</div>
<div class="a" style="left:731px;top:373.7px;width:37px;height:10.8px;background:#d4d4ec;border:1px solid #f6f6fc;border-right:1.5px solid #6a6a86;border-bottom:1.5px solid #6a6a86"></div><div class="a" style="left:738px;top:374.92px;font-size:6.6px;line-height:10px;color:#222;white-space:nowrap;-webkit-text-stroke:0.15px #222;transform:scaleX(0.924);transform-origin:0 0;">Preview</div>
<!-- right toolbar -->
<div class="a" style="left:780px;top:41px;width:20px;height:356px;background:linear-gradient(90deg,#f8f8fe 0,#f8f8fe 1.5px,#d8d8ec 2px,#d4d4ea 17px,#c4c4da 20px)"></div>
<div class="a" style="left:783px;top:43.5px;width:9px;height:1px;background:#a8a8bc;box-shadow:0 1px 0 #fff"></div>
<svg class="a" style="left:784.5px;top:48.5px" width="13" height="13" viewBox="0 0 13 13"><path d="M1.5 12.5L3 7L7 10Z" fill="#e09a50"/><path d="M8 8L12 1.5L12.5 7Z" fill="#e8a860"/><path d="M0.5 3.5L4.5 1.5L12 5.5L8 10L4 8.5Z" fill="#505058"/><path d="M2.5 3.5L5 2.5L7.5 4.5L5 6Z" fill="#e8e8ec"/><path d="M6 7L10 5.5L11 6.5L7.5 8.5Z" fill="#f4f4f8"/><path d="M4 7L6 8.5L5 9.5Z" fill="#d0d0d8"/></svg>
<div class="a" style="left:783px;top:69px;width:9px;height:1px;background:#a8a8bc;box-shadow:0 1px 0 #fff"></div>
<svg class="a" style="left:784px;top:74px" width="13" height="11" viewBox="0 0 13 11"><rect x="3" y="1" width="8" height="9" fill="#e4e4ec" stroke="#b4b4c0" stroke-width="0.8"/><rect x="1" y="3" width="5" height="6" fill="#d8d8e4" stroke="#a8a8b8" stroke-width="0.8"/><path d="M4 4H10M4 6H10" stroke="#b0b0bc" stroke-width="0.6"/></svg>
<svg class="a" style="left:784px;top:89px" width="13" height="11" viewBox="0 0 13 11"><rect x="3" y="1" width="8" height="9" fill="#e4e4ec" stroke="#b4b4c0" stroke-width="0.8"/><rect x="1" y="3" width="5" height="6" fill="#d8d8e4" stroke="#a8a8b8" stroke-width="0.8"/><path d="M4 4H10M4 6H10" stroke="#b0b0bc" stroke-width="0.6"/></svg>
<svg class="a" style="left:784px;top:104px" width="13" height="11" viewBox="0 0 13 11"><rect x="3" y="1" width="8" height="9" fill="#e4e4ec" stroke="#b4b4c0" stroke-width="0.8"/><rect x="1" y="3" width="5" height="6" fill="#d8d8e4" stroke="#a8a8b8" stroke-width="0.8"/><path d="M4 4H10M4 6H10" stroke="#b0b0bc" stroke-width="0.6"/></svg>
<svg class="a" style="left:784px;top:118px" width="13" height="11" viewBox="0 0 13 11"><rect x="3" y="1" width="8" height="9" fill="#e4e4ec" stroke="#b4b4c0" stroke-width="0.8"/><rect x="1" y="3" width="5" height="6" fill="#d8d8e4" stroke="#a8a8b8" stroke-width="0.8"/><path d="M4 4H10M4 6H10" stroke="#b0b0bc" stroke-width="0.6"/></svg>
<div class="a" style="left:783px;top:135px;width:9px;height:1px;background:#a8a8bc;box-shadow:0 1px 0 #fff"></div>
<svg class="a" style="left:786px;top:142px" width="9" height="11" viewBox="0 0 9 11"><path d="M1 0.5V9L3 7L5 10.5L6.5 9.5L4.5 6.5H7.5Z" fill="#f8f070" stroke="#404040" stroke-width="0.7"/></svg>
<svg class="a" style="left:795px;top:151px" width="4" height="3"><path d="M0 0H4L2 2.5Z" fill="#111"/></svg>
<svg class="a" style="left:785px;top:157px" width="11" height="11" viewBox="0 0 11 11"><path d="M1 1L10 10M10 1L1 10" stroke="#111" stroke-width="1.6"/><circle cx="5.5" cy="5.5" r="2" fill="#40a0e0"/><path d="M6 7L8 10" stroke="#e0c020" stroke-width="1.5"/></svg>
<svg class="a" style="left:795px;top:166px" width="4" height="3"><path d="M0 0H4L2 2.5Z" fill="#111"/></svg>
<div class="a" style="left:783px;top:174.5px;width:9px;height:1px;background:#a8a8bc;box-shadow:0 1px 0 #fff"></div>
<svg class="a" style="left:785px;top:182px" width="12" height="12" viewBox="0 0 12 12"><rect x="1" y="3" width="7" height="7" fill="#f0f0f0" stroke="#333" stroke-width="0.8"/><path d="M5 10L11 2V10Z" fill="#fff" stroke="#333" stroke-width="0.8"/><path d="M2 9L8 3" stroke="#2060c0" stroke-width="1"/></svg>
<svg class="a" style="left:795px;top:193px" width="4" height="3"><path d="M0 0H4L2 2.5Z" fill="#111"/></svg>
<div class="a" style="left:783px;top:200px;width:9px;height:1px;background:#a8a8bc;box-shadow:0 1px 0 #fff"></div>
<div class="a" style="left:789px;top:210px;width:2px;height:2px;background:#1c3cc0;border-radius:50%"></div>
<svg class="a" style="left:795px;top:218px" width="4" height="3"><path d="M0 0H4L2 2.5Z" fill="#111"/></svg>
<svg class="a" style="left:784px;top:221px" width="13" height="12" viewBox="0 0 13 12"><path d="M1 11L12 1" stroke="#2050c8" stroke-width="1.1"/></svg>
<svg class="a" style="left:795px;top:232px" width="4" height="3"><path d="M0 0H4L2 2.5Z" fill="#111"/></svg>
<svg class="a" style="left:784px;top:239px" width="13" height="9" viewBox="0 0 13 9"><path d="M1 8L4 2H12L9 8Z" fill="#f4e060" stroke="#505040" stroke-width="0.7"/></svg>
<svg class="a" style="left:795px;top:245px" width="4" height="3"><path d="M0 0H4L2 2.5Z" fill="#111"/></svg>
<div class="a" style="left:783px;top:251px;width:9px;height:1px;background:#a8a8bc;box-shadow:0 1px 0 #fff"></div>
<svg class="a" style="left:784px;top:255px" width="13" height="13" viewBox="0 0 13 13"><path d="M2 8Q4 4 10 5" stroke="#2060d0" stroke-width="1.5" fill="none"/><path d="M2 11Q6 8 11 9" stroke="#40b8e8" stroke-width="1.5" fill="none"/><path d="M5 2Q8 1 10 2" stroke="#60c0f0" stroke-width="1" fill="none"/></svg>
<svg class="a" style="left:795px;top:266px" width="4" height="3"><path d="M0 0H4L2 2.5Z" fill="#111"/></svg>
<svg class="a" style="left:784px;top:272px" width="13" height="12" viewBox="0 0 13 12"><path d="M2 3Q7 0 11 4L9 11Q4 9 2 6Z" fill="#1a6ac0"/><path d="M3 4Q7 2 10 5L8 9Q5 8 3 6Z" fill="#50c0f0"/></svg>
<svg class="a" style="left:784px;top:286px" width="13" height="11" viewBox="0 0 13 11"><path d="M1 9L6 2L12 5L7 10Z" fill="#30a8e8"/><path d="M6 2L12 5" stroke="#1a3070" stroke-width="1"/></svg>
<svg class="a" style="left:795px;top:296px" width="4" height="3"><path d="M0 0H4L2 2.5Z" fill="#111"/></svg>
<div class="a" style="left:783px;top:303px;width:9px;height:1px;background:#a8a8bc;box-shadow:0 1px 0 #fff"></div>
<svg class="a" style="left:784px;top:306px" width="13" height="13" viewBox="0 0 13 13"><circle cx="6" cy="6.5" r="5" fill="none" stroke="#2050c0" stroke-width="1.2"/></svg>
<svg class="a" style="left:795px;top:316px" width="4" height="3"><path d="M0 0H4L2 2.5Z" fill="#111"/></svg>
<svg class="a" style="left:784px;top:322px" width="13" height="12" viewBox="0 0 13 12"><path d="M2 10Q0 5 5 5Q10 5 7 1M5 5Q9 9 11 6" stroke="#2050c0" stroke-width="1.1" fill="none"/></svg>
<svg class="a" style="left:795px;top:331px" width="4" height="3"><path d="M0 0H4L2 2.5Z" fill="#111"/></svg>
<div class="a" style="left:783px;top:340.5px;width:9px;height:1px;background:#a8a8bc;box-shadow:0 1px 0 #fff"></div>
<svg class="a" style="left:784px;top:346px" width="13" height="13" viewBox="0 0 13 13"><path d="M1 2L6 1L12 6L9 12L3 10Z" fill="#f0e8c8"/><path d="M2 3L10 10M4 2L11 8" stroke="#333" stroke-width="1.3"/><path d="M3 7L7 11" stroke="#e09020" stroke-width="1.5"/></svg>
<div class="a" style="left:783px;top:365px;width:9px;height:1px;background:#a8a8bc;box-shadow:0 1px 0 #fff"></div>
<svg class="a" style="left:784px;top:371px" width="13" height="11" viewBox="0 0 13 11"><path d="M1 9Q6 -1 12 9Z" fill="#40b0e8"/><path d="M3 9Q6 4 10 9" fill="#f0d020"/><circle cx="6.5" cy="3" r="1.5" fill="#222"/></svg>
<svg class="a" style="left:793px;top:389px" width="5" height="5" viewBox="0 0 5 5"><path d="M0.5 0.5L2.5 2L4.5 0.5M0.5 2.5L2.5 4L4.5 2.5" stroke="#c0c0cc" stroke-width="0.7" fill="none"/></svg>
<svg class="a" style="left:762px;top:389px" width="4" height="5" viewBox="0 0 4 5"><path d="M3.5 0.5L0.5 4.5" stroke="#9090a8" stroke-width="0.7"/></svg>
<!-- top toolbar icons -->
<svg class="a" style="left:230px;top:25px" width="13" height="13" viewBox="0 0 13 13"><path d="M1 12L6 6L8 8L3 12Z" fill="#2a70d0"/><path d="M5 6L10 1L12 3L7 8Z" fill="#40a8f0" stroke="#1a3a80" stroke-width="0.7"/><path d="M0.5 9L4 12" stroke="#70c0ff" stroke-width="1.2"/></svg>
<svg class="a" style="left:244px;top:25px" width="13" height="13" viewBox="0 0 13 13"><circle cx="5" cy="8" r="4" fill="#e8c030"/><path d="M1 9Q5 13 9 9Q5 11 1 9Z" fill="#e040c0"/><path d="M7 6L11 1" stroke="#3060d0" stroke-width="1.5"/><path d="M10 1L12 2" stroke="#f07020" stroke-width="1.5"/></svg>
<div class="a" style="left:379px;top:24px;width:1px;height:8px;background:#a8a8bc;box-shadow:1px 0 0 #fff"></div>
<svg class="a" style="left:385px;top:26px" width="12" height="11" viewBox="0 0 12 11"><rect x="0.5" y="0.5" width="4.5" height="4.5" fill="#2aa8e8" stroke="#1a3a80" stroke-width="0.8"/><rect x="6" y="0.5" width="4.5" height="4.5" fill="#2aa8e8" stroke="#1a3a80" stroke-width="0.8"/><rect x="0.5" y="6" width="4.5" height="4.5" fill="#2aa8e8" stroke="#1a3a80" stroke-width="0.8"/><rect x="6" y="6" width="4.5" height="4.5" fill="#2aa8e8" stroke="#1a3a80" stroke-width="0.8"/></svg>
<svg class="a" style="left:396px;top:36px" width="4" height="3"><path d="M0 0H4L2 2.5Z" fill="#111"/></svg>
<svg class="a" style="left:400px;top:26px" width="12" height="11" viewBox="0 0 12 11"><path d="M1 8L6 3L11 5L6 10Z" fill="#40b8f0"/><path d="M4 4L10 2L11 5" fill="#f0f080" stroke="#303030" stroke-width="0.6"/><path d="M1 8L5 11" stroke="#2050a0" stroke-width="1"/></svg>
<svg class="a" style="left:411px;top:36px" width="4" height="3"><path d="M0 0H4L2 2.5Z" fill="#111"/></svg>
<svg class="a" style="left:416px;top:26px" width="12" height="11" viewBox="0 0 12 11"><path d="M2 3L6 1L10 3V8L6 10L2 8Z" fill="#c8e0f0" stroke="#1a2a50" stroke-width="0.8"/><path d="M2 3L6 5L10 3M6 5V10" stroke="#40a0e0" stroke-width="0.8" fill="none"/><path d="M6 6L9 9" stroke="#f06010" stroke-width="1.3"/></svg>
<svg class="a" style="left:427px;top:36px" width="4" height="3"><path d="M0 0H4L2 2.5Z" fill="#111"/></svg>
<svg class="a" style="left:431px;top:26px" width="12" height="11" viewBox="0 0 12 11"><path d="M1 3Q5 0 9 3Q11 6 10 10L8 11Q8 6 5 4Q3 4 1 5Z" fill="#40b8f0"/><path d="M2 2Q6 0 8 2" stroke="#f08020" stroke-width="1" fill="none"/></svg>
<svg class="a" style="left:442px;top:36px" width="4" height="3"><path d="M0 0H4L2 2.5Z" fill="#111"/></svg>
<svg class="a" style="left:447px;top:26px" width="12" height="11" viewBox="0 0 12 11"><path d="M1 2L4 1V10L1 11Z" fill="#90d8f8"/><path d="M6 3L10 1V10L6 11Z" fill="#40a8e8" stroke="#1a3a80" stroke-width="0.6"/></svg>
<svg class="a" style="left:458px;top:36px" width="4" height="3"><path d="M0 0H4L2 2.5Z" fill="#111"/></svg>
<svg class="a" style="left:462px;top:26px" width="12" height="11" viewBox="0 0 12 11"><path d="M1 8L6 2L11 6L6 11Z" fill="#30a8e8"/><path d="M6 2L8 0.5L11 3L9 5Z" fill="#f0e040" stroke="#333" stroke-width="0.6"/><path d="M1 8L4 11" stroke="#111" stroke-width="1.2"/></svg>
<svg class="a" style="left:473px;top:36px" width="4" height="3"><path d="M0 0H4L2 2.5Z" fill="#111"/></svg>
<div class="a" style="left:493.5px;top:24px;width:1px;height:8px;background:#a8a8bc;box-shadow:1px 0 0 #fff"></div>
<svg class="a" style="left:499px;top:26px" width="12" height="11" viewBox="0 0 12 11"><path d="M1 9L6 6L11 9L6 11Z" fill="#a0e0f0" stroke="#2a70a0" stroke-width="0.6"/><path d="M6 7L8 2" stroke="#e8a020" stroke-width="1.3"/><rect x="7" y="1" width="3" height="3" fill="#f07020"/></svg>
<svg class="a" style="left:510px;top:36px" width="4" height="3"><path d="M0 0H4L2 2.5Z" fill="#111"/></svg>
<svg class="a" style="left:514.5px;top:26px" width="12" height="11" viewBox="0 0 12 11"><path d="M1 5Q6 0 11 5L9 6Q6 3 3 6Z" fill="#60b8f0"/><path d="M6 5V10" stroke="#d06020" stroke-width="1.6"/><path d="M2 10Q6 7 10 10" stroke="#2050c0" stroke-width="1.5" fill="none"/></svg>
<svg class="a" style="left:525.5px;top:36px" width="4" height="3"><path d="M0 0H4L2 2.5Z" fill="#111"/></svg>
<svg class="a" style="left:530.5px;top:26px" width="12" height="11" viewBox="0 0 12 11"><path d="M2 5L8 2L11 6L5 10Z" fill="#40b0f0" stroke="#1a3070" stroke-width="0.7"/><path d="M1 3L4 1" stroke="#333" stroke-width="1.2"/></svg>
<svg class="a" style="left:541.5px;top:36px" width="4" height="3"><path d="M0 0H4L2 2.5Z" fill="#111"/></svg>
<svg class="a" style="left:546px;top:26px" width="12" height="11" viewBox="0 0 12 11"><path d="M1 9Q6 -2 11 9Q6 6 1 9Z" fill="#40b8f0" stroke="#1a3a80" stroke-width="0.7"/><path d="M3 8Q6 3 9 8" fill="#f0e060"/></svg>
<svg class="a" style="left:560.5px;top:26px" width="12" height="11" viewBox="0 0 12 11"><path d="M1 9Q6 -2 11 9" fill="#90d890" stroke="#1a3a50" stroke-width="1"/><path d="M3 9Q6 4 9 9" fill="#f0e060"/></svg>
<svg class="a" style="left:574.5px;top:26px" width="12" height="11" viewBox="0 0 12 11"><path d="M1 3L10 1L11 4L2 6Z" fill="#40b0e8"/><path d="M1 7L10 5L11 8L2 10Z" fill="#40b0e8"/><path d="M1 5L11 3" stroke="#f0e040" stroke-width="1.5"/></svg>
<!-- bottom toolbar -->
<div class="a" style="left:0;top:39px;width:800px;height:3px;background:linear-gradient(#b8b8cc 0,#8c8c8a 2px,#707070 3px)"></div>
<div class="a" style="left:0;top:396.5px;width:800px;height:20.5px;background:linear-gradient(#e8e8f4 0,#fafafd 1.5px,#f4f4fa 4.5px,#d4d4e8 6px,#d0d0e6 15px,#b8b8ca 17.5px,#8e8e9a 20.5px)"></div>
<div class="a" style="left:3px;top:400px;width:1px;height:9px;background:#a0a0b0"></div>
<svg class="a" style="left:11px;top:402px" width="10" height="12" viewBox="0 0 10 12"><path d="M1 0.5H6L9 3.5V11H1Z" fill="#fcf8c8" stroke="#a09870" stroke-width="0.7"/></svg>
<svg class="a" style="left:24px;top:402px" width="11" height="12" viewBox="0 0 11 12"><path d="M0.5 3H4L5 4H10V10H0.5Z" fill="#d8a020"/><path d="M1.5 6H11L9.5 10H0.5Z" fill="#f8d050" stroke="#806010" stroke-width="0.5"/><path d="M7 1L10 2L9 4" stroke="#406080" stroke-width="0.8" fill="none"/></svg>
<svg class="a" style="left:39px;top:402px" width="10" height="12" viewBox="0 0 10 12"><rect x="0.5" y="0.5" width="9" height="10" fill="#303010" stroke="#202000" stroke-width="0.6"/><rect x="2" y="1" width="6" height="4" fill="#f0e080"/><rect x="2.5" y="7" width="5" height="3" fill="#606040"/></svg>
<svg class="a" style="left:53px;top:402px" width="11" height="12" viewBox="0 0 11 12"><path d="M1 6L3 2H9L11 6Z" fill="#a0c8e0" stroke="#505050" stroke-width="0.6"/><rect x="0.5" y="6" width="10.5" height="4" fill="#909870" stroke="#404030" stroke-width="0.6"/></svg>
<svg class="a" style="left:69px;top:402px" width="8" height="12" viewBox="0 0 8 12"><path d="M1 1L6 10M7 1L2 10" stroke="#b8b8c0" stroke-width="1.2"/><circle cx="2" cy="9.5" r="1.5" fill="none" stroke="#b0b0b8"/><circle cx="6" cy="9.5" r="1.5" fill="none" stroke="#b0b0b8"/></svg>
<svg class="a" style="left:82px;top:402px" width="11" height="12" viewBox="0 0 11 12"><rect x="1" y="1" width="6" height="7" fill="#e8e8ee" stroke="#b8b8c4" stroke-width="0.7"/><rect x="4" y="3" width="6" height="7" fill="#e0e0e8" stroke="#b0b0bc" stroke-width="0.7"/></svg>
<svg class="a" style="left:97px;top:402px" width="10" height="12" viewBox="0 0 10 12"><rect x="0.5" y="1.5" width="7" height="9" fill="#b08040" stroke="#604020" stroke-width="0.6"/><rect x="2" y="0.5" width="4" height="2" fill="#e0e0e0"/><rect x="4" y="5" width="5.5" height="5.5" fill="#f0f0f8" stroke="#4060a0" stroke-width="0.6"/></svg>
<svg class="a" style="left:112px;top:402px" width="10" height="12" viewBox="0 0 10 12"><path d="M2 3Q8 1 9 6Q8 10 4 10" stroke="#20a060" stroke-width="1.8" fill="none"/><path d="M0 3L4 0V6Z" fill="#20a060"/></svg>
<svg class="a" style="left:128px;top:402px" width="10" height="12" viewBox="0 0 10 12"><path d="M8 3Q2 1 1 6Q2 10 6 10" stroke="#c8c8d0" stroke-width="1.6" fill="none"/><path d="M10 3L6 0V6Z" fill="#c8c8d0"/></svg>
<svg class="a" style="left:143px;top:402px" width="11" height="12" viewBox="0 0 11 12"><path d="M0.5 2V10L3 8L5 11" fill="#f8f070" stroke="#303030" stroke-width="0.6"/><path d="M5 3Q5 0.5 8 0.5Q11 1 10 4Q8 5 8 7M8 9V10.5" stroke="#2050c0" stroke-width="1.4" fill="none"/></svg>
<svg class="a" style="left:167.5px;top:402px" width="11" height="12" viewBox="0 0 11 12"><text x="0" y="9" font-family="Liberation Serif" font-style="italic" font-size="10" fill="#111">f</text><text x="4" y="10" font-family="Liberation Sans" font-size="6" fill="#111">(x)</text></svg>
<svg class="a" style="left:182px;top:402px" width="11" height="12" viewBox="0 0 11 12"><path d="M5.5 1C9 1 11 3 11 5C11 7 9 9 5.5 9L2 11L3 8.5C1 7.5 0.5 6 0.5 5C0.5 3 2.5 1 5.5 1Z" fill="#f0f0f0" stroke="#333" stroke-width="0.8"/><path d="M3 4H8M3 6H7" stroke="#333" stroke-width="0.6"/></svg>
<svg class="a" style="left:198.5px;top:402px" width="4" height="12" viewBox="0 0 4 12"><rect x="0.5" y="2" width="3" height="7" rx="1.5" fill="none" stroke="#c0c0c8" stroke-width="0.8"/></svg>
<svg class="a" style="left:208.5px;top:402px" width="10" height="12" viewBox="0 0 10 12"><rect x="0.5" y="0.5" width="9" height="10" fill="#505060" stroke="#303040" stroke-width="0.6"/><rect x="0.5" y="0.5" width="9" height="2" fill="#2040c0"/></svg>
<svg class="a" style="left:223px;top:402px" width="12" height="12" viewBox="0 0 12 12"><circle cx="2" cy="6" r="1.5" fill="#3070d0"/><circle cx="9" cy="2" r="1.5" fill="#f08020"/><circle cx="9" cy="6" r="1.5" fill="#3070d0"/><circle cx="9" cy="10" r="1.5" fill="#3070d0"/><path d="M2 6L9 2M2 6H9M2 6L9 10" stroke="#3070d0" stroke-width="0.7"/></svg>
<svg class="a" style="left:240px;top:402px" width="9" height="12" viewBox="0 0 9 12"><path d="M2 5V3Q2 0.5 4.5 0.5Q7 0.5 7 3V5" stroke="#404040" stroke-width="1" fill="none"/><rect x="0.5" y="5" width="8" height="6" fill="#707070" stroke="#303030" stroke-width="0.6"/></svg>
<svg class="a" style="left:254px;top:402px" width="11" height="12" viewBox="0 0 11 12"><rect x="0.5" y="1" width="4" height="9" fill="#e8e8c0" stroke="#606040" stroke-width="0.6"/><path d="M1 3H4M1 5H4M1 7H4" stroke="#40a0c0" stroke-width="1"/><path d="M7 2Q9 5.5 7 9M9 4H11M9 7H11" stroke="#606070" stroke-width="0.8" fill="none"/></svg>
<svg class="a" style="left:278px;top:402px" width="11" height="12" viewBox="0 0 11 12"><path d="M0.5 5L5 3L11 8L8 10Z" fill="#50b8f0"/><path d="M3 1L10 10M9 1L4 9" stroke="#1a3a80" stroke-width="0.8"/></svg>
<svg class="a" style="left:292.5px;top:402px" width="11" height="12" viewBox="0 0 11 12"><rect x="0.5" y="0.5" width="10" height="10" fill="#f0f080" stroke="#606060" stroke-width="0.6"/><path d="M2 2L9 9M9 2L2 9" stroke="#303030" stroke-width="1"/><rect x="4" y="4" width="3" height="3" fill="#40a060"/></svg>
<svg class="a" style="left:308px;top:402px" width="10" height="12" viewBox="0 0 10 12"><path d="M5 0.5V10.5M0 5.5H10" stroke="#1a2a90" stroke-width="1.3"/><path d="M5 0L3 2.5H7ZM5 11L3 8.5H7ZM0 5.5L2.5 3.5V7.5ZM10 5.5L7.5 3.5V7.5Z" fill="#1a2a90"/></svg>
<svg class="a" style="left:322px;top:402px" width="11" height="12" viewBox="0 0 11 12"><ellipse cx="5.5" cy="6" rx="5" ry="4" fill="#50a8e8" stroke="#1a3a80" stroke-width="0.7"/><path d="M1 5Q5 1 10 4" stroke="#d04040" stroke-width="1" fill="none"/><circle cx="6" cy="6" r="2" fill="#f0f0f0"/></svg>
<svg class="a" style="left:337px;top:402px" width="11" height="12" viewBox="0 0 11 12"><circle cx="4.5" cy="4.5" r="3.5" fill="#c8e8f8" stroke="#1a2a70" stroke-width="1.2"/><path d="M7 7L10.5 10.5" stroke="#1a2a70" stroke-width="1.8"/><path d="M2.5 4.5H6.5M4.5 2.5V6.5" stroke="#1a2a70" stroke-width="0.8"/></svg>
<svg class="a" style="left:351px;top:402px" width="11" height="12" viewBox="0 0 11 12"><circle cx="4.5" cy="4.5" r="3.5" fill="#c8e8f8" stroke="#1a2a70" stroke-width="1.2"/><path d="M7 7L10.5 10.5" stroke="#1a2a70" stroke-width="1.8"/><path d="M2.5 4.5H6.5" stroke="#1a2a70" stroke-width="0.8"/></svg>
<svg class="a" style="left:366px;top:402px" width="11" height="12" viewBox="0 0 11 12"><path d="M0.5 10L3 6H11L8.5 10Z" fill="#40b0e0" stroke="#1a3a70" stroke-width="0.6"/><path d="M6 8V1M4 3L6 0.5L8 3" stroke="#e08020" stroke-width="1" fill="none"/></svg>
<svg class="a" style="left:380.5px;top:402px" width="10" height="12" viewBox="0 0 10 12"><rect x="0.5" y="0.5" width="9" height="10" fill="#30a8f0" stroke="#1a2a80" stroke-width="0.7"/><path d="M5 0.5V10.5M0.5 5.5H9.5" stroke="#1a2a80" stroke-width="0.7"/></svg>
<svg class="a" style="left:394.5px;top:402px" width="11" height="12" viewBox="0 0 11 12"><path d="M0.5 3L3 0.5H10.5V8L8 10.5H0.5Z" fill="#40b8f8" stroke="#1a2a80" stroke-width="0.7"/><path d="M0.5 3H8V10.5M8 3L10.5 0.5" stroke="#1a2a80" stroke-width="0.7" fill="none"/></svg>
<svg class="a" style="left:412px;top:402px" width="8" height="12" viewBox="0 0 8 12"><rect x="0.5" y="0.5" width="7" height="10" rx="1.5" fill="#f0f0f8" stroke="#404060" stroke-width="0.7"/><text x="1.8" y="8" font-family="Liberation Sans" font-size="7" font-weight="bold" fill="#222">?</text></svg>
<svg class="a" style="left:426px;top:402px" width="10" height="12" viewBox="0 0 10 12"><rect x="0.5" y="0.5" width="9" height="10" fill="#60c8f0" stroke="#7070a0" stroke-width="0.7"/><path d="M2 8L8 3" stroke="#f0e040" stroke-width="2"/><path d="M2 5L5 7" stroke="#305080" stroke-width="1"/></svg>
<svg class="a" style="left:440.5px;top:402px" width="10" height="12" viewBox="0 0 10 12"><rect x="0.5" y="0.5" width="9" height="10" fill="#60c8f0" stroke="#7070a0" stroke-width="0.7"/><path d="M2 8L8 4" stroke="#f0e040" stroke-width="2"/><path d="M2 6L5 8" stroke="#305080" stroke-width="1"/></svg>
<svg class="a" style="left:465.5px;top:402px" width="11" height="12" viewBox="0 0 11 12"><path d="M1 7H10V10H1Z" fill="#e0e0e8" stroke="#404040" stroke-width="0.7"/><path d="M2 7L4 4H8L9 7" fill="#c0c0c8" stroke="#404040" stroke-width="0.6"/><circle cx="3" cy="2.5" r="2" fill="#3070d0"/><path d="M6 1Q9 1 9 4" stroke="#3070d0" stroke-width="1" fill="none"/></svg>
<svg class="a" style="left:490px;top:402px" width="10" height="12" viewBox="0 0 10 12"><path d="M0.5 3H9.5M2 1.5L0.5 3L2 4.5M8 1.5L9.5 3L8 4.5" stroke="#1a3aa0" stroke-width="0.9" fill="none"/><rect x="0.5" y="6" width="9" height="4" fill="#f0c080" stroke="#806040" stroke-width="0.5"/></svg>
<svg class="a" style="left:505.5px;top:402px" width="9" height="12" viewBox="0 0 9 12"><rect x="2" y="0.5" width="6" height="10" fill="#303038" stroke="#101010" stroke-width="0.6"/><rect x="0.5" y="3" width="4" height="4" fill="#40a070"/><rect x="4" y="2" width="3" height="2" fill="#e0e0e0"/></svg>
<svg class="a" style="left:521px;top:402px" width="7" height="12" viewBox="0 0 7 12"><path d="M2 3V1.5Q3.5 0 5 1.5V3" stroke="#404040" stroke-width="0.8" fill="none"/><path d="M1 3H6L7 11H0Z" fill="#d8b040" stroke="#705010" stroke-width="0.5"/></svg>
<svg class="a" style="left:542.5px;top:402px" width="11" height="12" viewBox="0 0 11 12"><rect x="0.5" y="2" width="10" height="9" fill="#e4e4ec" stroke="#c0c0c8" stroke-width="0.7"/><path d="M3 2V11M6 2V11M0.5 5H10.5" stroke="#c8c8d0" stroke-width="0.6"/></svg>
<svg class="a" style="left:557.5px;top:402px" width="11" height="12" viewBox="0 0 11 12"><rect x="1" y="1" width="8" height="10" fill="#60c0f0" stroke="#806040" stroke-width="0.8"/><rect x="1" y="1" width="8" height="2" fill="#f0d060"/><rect x="9" y="2" width="1.5" height="8" fill="#f0d060"/></svg>
<svg class="a" style="left:583.5px;top:402px" width="11" height="12" viewBox="0 0 11 12"><text x="3" y="5" font-family="Liberation Sans" font-size="4.5" fill="#1a2aa0">ABC</text><path d="M1 10L6 6M1 10V7M1 10H4" stroke="#1a2aa0" stroke-width="0.8" fill="none"/></svg>
<svg class="a" style="left:607.5px;top:402px" width="13" height="12" viewBox="0 0 13 12"><path d="M2 4L7 1L12 4V10L7 12L2 10Z" fill="#4070d0" stroke="#c02040" stroke-width="0.8"/><path d="M2 4L7 7L12 4M7 7V12" stroke="#f0a0c0" stroke-width="0.6" fill="none"/><rect x="1" y="6" width="5" height="5" fill="#50a0f0"/></svg>
<svg class="a" style="left:633.5px;top:402px" width="12" height="12" viewBox="0 0 12 12"><path d="M1 8L6 5L11 8L6 11Z" fill="#20a0c0"/><path d="M1 8L6 5L6 8Z" fill="#e02040"/><path d="M6 5L9 1M8 2L10 4" stroke="#3050c0" stroke-width="1"/><circle cx="4" cy="2.5" r="1.3" fill="#f0e040"/></svg>
<svg class="a" style="left:659px;top:402px" width="13" height="12" viewBox="0 0 13 12"><path d="M1 8Q1 3 6 2Q11 2 12 7Q11 12 6 12Q2 11 1 8Z" fill="#e08030"/><path d="M3 6Q6 4 10 6" stroke="#f0e0c0" stroke-width="1.2" fill="none"/><path d="M7 1L10 4" stroke="#a04010" stroke-width="1.2"/></svg>
<svg class="a" style="left:121.5px;top:412px" width="4" height="3"><path d="M0 0H4L2 2.5Z" fill="#111"/></svg>
<svg class="a" style="left:137.5px;top:412px" width="4" height="3"><path d="M0 0H4L2 2.5Z" fill="#111"/></svg>
<svg class="a" style="left:217.5px;top:412px" width="4" height="3"><path d="M0 0H4L2 2.5Z" fill="#111"/></svg>
<svg class="a" style="left:248.5px;top:412px" width="4" height="3"><path d="M0 0H4L2 2.5Z" fill="#111"/></svg>
<svg class="a" style="left:404.5px;top:412px" width="4" height="3"><path d="M0 0H4L2 2.5Z" fill="#111"/></svg>
<svg class="a" style="left:419.5px;top:412px" width="4" height="3"><path d="M0 0H4L2 2.5Z" fill="#111"/></svg>
<svg class="a" style="left:594.5px;top:412px" width="4" height="3"><path d="M0 0H4L2 2.5Z" fill="#111"/></svg>
<svg class="a" style="left:619.5px;top:412px" width="4" height="3"><path d="M0 0H4L2 2.5Z" fill="#111"/></svg>
<svg class="a" style="left:644.5px;top:412px" width="4" height="3"><path d="M0 0H4L2 2.5Z" fill="#111"/></svg>
<div class="a" style="left:162px;top:400px;width:1px;height:8px;background:#a8a8bc;box-shadow:1px 0 0 #fff"></div>
<div class="a" style="left:272.5px;top:400px;width:1px;height:8px;background:#a8a8bc;box-shadow:1px 0 0 #fff"></div>
<div class="a" style="left:460px;top:400px;width:1px;height:8px;background:#a8a8bc;box-shadow:1px 0 0 #fff"></div>
<div class="a" style="left:483.75px;top:400px;width:1px;height:8px;background:#a8a8bc;box-shadow:1px 0 0 #fff"></div>
<div class="a" style="left:538px;top:400px;width:1px;height:8px;background:#a8a8bc;box-shadow:1px 0 0 #fff"></div>
<div class="a" style="left:577.5px;top:400px;width:1px;height:8px;background:#a8a8bc;box-shadow:1px 0 0 #fff"></div>
<div class="a" style="left:602px;top:400px;width:1px;height:8px;background:#a8a8bc;box-shadow:1px 0 0 #fff"></div>
<div class="a" style="left:628px;top:400px;width:1px;height:8px;background:#a8a8bc;box-shadow:1px 0 0 #fff"></div>
<div class="a" style="left:653.75px;top:400px;width:1px;height:8px;background:#a8a8bc;box-shadow:1px 0 0 #fff"></div>
<svg class="a" style="left:775px;top:397px" width="22" height="17" viewBox="0 0 22 17"><path d="M5 2Q9 0.5 11 3Q9 5 7 6Q5 8 6 11Q4 8 5 5" fill="none" stroke="#d02040" stroke-width="1.4"/><path d="M3 10Q4 5 8 4" stroke="#2040a0" stroke-width="1.4" fill="none"/><text x="3" y="16" font-family="Liberation Sans" font-style="italic" font-weight="bold" font-size="5.5" fill="#1a2a90">CATIA</text><path d="M12 3Q16 2 16 5Q13 7 16 10" stroke="#d02040" stroke-width="1.2" fill="none"/></svg>
<!-- status -->
<div class="a" style="left:0;top:417px;width:800px;height:12px;background:#d0d0e6"></div>
<div class="a" style="left:1.7px;top:417.92px;font-size:6.6px;line-height:10px;color:#30304a;white-space:nowrap;-webkit-text-stroke:0.15px #30304a;transform:scaleX(0.953);transform-origin:0 0;">Select an element to trim/remove</div>
<div class="a" style="left:608.5px;top:417.5px;width:155.5px;height:10px;background:#fff;border:0.5px solid #b0b0c0"></div>
<div class="a" style="left:768.5px;top:418px;width:9.5px;height:9px;background:#e0e0ec;border:0.5px solid #9090a0"></div>
<svg class="a" style="left:770px;top:419px" width="7" height="7" viewBox="0 0 7 7"><rect x="0.5" y="1" width="5" height="4" fill="none" stroke="#303040" stroke-width="1"/><rect x="2" y="3" width="3" height="3" fill="#303040"/></svg>
<div class="a" style="left:783.5px;top:418px;width:14px;height:9px;background:#e4e4ee;border:0.5px solid #a8a8b8"></div>
<svg class="a" style="left:786px;top:419px" width="9" height="7" viewBox="0 0 9 7"><ellipse cx="4.5" cy="3.5" rx="3" ry="2.5" fill="none" stroke="#b0b0bc" stroke-width="0.8"/></svg>
<!-- taskbar -->
<div class="a" style="left:0;top:429px;width:800px;height:21px;background:#141414"></div>
<div class="a" style="left:0;top:429px;width:25px;height:21px;background:#0e0e0e"></div>
<svg class="a" style="left:8px;top:435px" width="10" height="9" viewBox="0 0 10 9"><path d="M0 1.3L4.2 0.7V4.2H0ZM4.8 0.6L10 0V4.2H4.8ZM0 4.8H4.2V8.3L0 7.7ZM4.8 4.8H10V9L4.8 8.4Z" fill="#fff"/></svg>
<div class="a" style="left:25px;top:429px;width:180px;height:21px;background:#f0f0f0;border:0.5px solid #d0d0d0"></div>
<svg class="a" style="left:30px;top:434px" width="11" height="11" viewBox="0 0 11 11"><circle cx="6.5" cy="4" r="3" fill="none" stroke="#222" stroke-width="0.9"/><path d="M4.3 6.3L1 9.8" stroke="#222" stroke-width="1"/></svg>
<div class="a" style="left:46px;top:435.16px;font-size:9.3px;line-height:10px;color:#333;white-space:nowrap;-webkit-text-stroke:0.15px #333;transform:scaleX(0.827);transform-origin:0 0;">Type here to search</div>
<div class="a" style="left:213px;top:435px;width:8px;height:8px;border-radius:50%;border:1.3px solid #fff"></div>
<svg class="a" style="left:236px;top:433px" width="11" height="9" viewBox="0 0 11 9"><rect x="2" y="1.5" width="5.5" height="6" fill="none" stroke="#fff" stroke-width="0.9"/><path d="M0.5 1V8M9 1V8" stroke="#fff" stroke-width="0.9"/></svg>
<svg class="a" style="left:261px;top:431px" width="14" height="14" viewBox="0 0 14 14"><path d="M7 1A6 6 0 1 0 13 8H5Q5 4 8 4Q11 4 11.5 6.5Q13 2 7 1Z" fill="#2a8ee0"/><path d="M1.5 8Q2 13 8 13Q11 13 12.5 11Q7 12 5 9Z" fill="#3ac060"/></svg>
<svg class="a" style="left:289px;top:432px" width="13" height="12" viewBox="0 0 13 12"><path d="M4 1L10 0V7L4 8Z" fill="#3ab0f0"/><path d="M1 8L11 8L12.5 11H2Z" fill="#d0d8e0"/></svg>
<svg class="a" style="left:313px;top:431px" width="14" height="13" viewBox="0 0 14 13"><path d="M0.5 2H5L6 3.5H13.5V12H0.5Z" fill="#e8b020"/><path d="M0.5 5H13.5V12H0.5Z" fill="#f8d050"/><rect x="4" y="7" width="6" height="3" fill="#2a80d0"/></svg>
<svg class="a" style="left:338px;top:432px" width="15" height="12" viewBox="0 0 15 12"><rect x="0.5" y="2" width="14" height="10" fill="#2a9ae8"/><path d="M0.5 2L7.5 8L14.5 2" fill="#60c0f8" stroke="#fff" stroke-width="0.8"/></svg>
<svg class="a" style="left:365px;top:431px" width="14" height="14" viewBox="0 0 14 14"><circle cx="7" cy="7" r="6.5" fill="#e04030"/><path d="M7 7L1.4 10.2A6.5 6.5 0 0 0 10 12.8Z" fill="#30a050"/><path d="M7 7L10 12.8A6.5 6.5 0 0 0 13.5 7Z" fill="#f8c020"/><circle cx="7" cy="7" r="3" fill="#fff"/><circle cx="7" cy="7" r="2.2" fill="#3a80e8"/></svg>
<svg class="a" style="left:392px;top:432px" width="11" height="11" viewBox="0 0 11 11"><circle cx="5.5" cy="5.5" r="3.5" fill="none" stroke="#fff" stroke-width="2.4" stroke-dasharray="1.6 1.1"/><circle cx="5.5" cy="5.5" r="2.5" fill="none" stroke="#fff" stroke-width="1.3"/></svg>
<svg class="a" style="left:416px;top:431px" width="14" height="13" viewBox="0 0 14 13"><rect x="4" y="0.5" width="9.5" height="12" fill="#4a8ae8"/><rect x="0.5" y="2.5" width="8" height="8" fill="#1a50b0"/><text x="1.2" y="9" font-family="Liberation Sans" font-weight="bold" font-size="6.5" fill="#fff">W</text></svg>
<div class="a" style="left:437px;top:429px;width:24px;height:21px;background:#2e2e2e"></div>
<svg class="a" style="left:442px;top:432px" width="14" height="13" viewBox="0 0 14 13"><rect x="0.5" y="0.5" width="13" height="12" fill="#101010" stroke="#c8c8c8" stroke-width="0.8"/><path d="M2 11Q4 4 12 2" stroke="#40a0f0" stroke-width="2" fill="none"/><path d="M5 11Q7 6 12 5" stroke="#f08020" stroke-width="1.8" fill="none"/></svg>
<div class="a" style="left:258px;top:448.5px;width:14px;height:1.5px;background:#a8a8a8"></div>
<div class="a" style="left:310px;top:448.5px;width:15px;height:1.5px;background:#a8a8a8"></div>
<div class="a" style="left:359px;top:448.5px;width:17px;height:1.5px;background:#a8a8a8"></div>
<div class="a" style="left:412.5px;top:448.5px;width:21.0px;height:1.5px;background:#a8a8a8"></div>
<div class="a" style="left:437px;top:448.5px;width:24px;height:1.5px;background:#a8a8a8"></div>
<svg class="a" style="left:643px;top:435px" width="8" height="6" viewBox="0 0 8 6"><path d="M0.5 5L4 1.2L7.5 5" stroke="#fff" stroke-width="0.9" fill="none"/></svg>
<svg class="a" style="left:656px;top:433px" width="8" height="11" viewBox="0 0 8 11"><rect x="1.5" y="0.5" width="5" height="9" rx="1" fill="none" stroke="#ddd" stroke-width="0.9"/><rect x="0" y="3" width="3" height="4" fill="#141414" stroke="#ddd" stroke-width="0.7"/></svg>
<svg class="a" style="left:667px;top:433px" width="10" height="11" viewBox="0 0 10 11"><path d="M1 6Q1 3 4 3Q5 1 7 2Q9 3 8.5 6Z" fill="#ddd"/><circle cx="7" cy="7.5" r="2.4" fill="#e02020"/><path d="M6 6.5L8 8.5M8 6.5L6 8.5" stroke="#fff" stroke-width="0.6"/></svg>
<svg class="a" style="left:680px;top:435px" width="9" height="6" viewBox="0 0 9 6"><rect x="0.5" y="0.5" width="7" height="5" fill="none" stroke="#ddd" stroke-width="0.9"/><rect x="1.5" y="1.5" width="3.5" height="3" fill="#ddd"/><rect x="7.8" y="2" width="1" height="2" fill="#ddd"/></svg>
<svg class="a" style="left:692px;top:433px" width="9" height="10" viewBox="0 0 9 10"><path d="M0.5 9.5L8.5 1.5V9.5Z" fill="none" stroke="#888" stroke-width="0.6"/><path d="M0.5 9.5L4.5 5.5V9.5Z" fill="#ddd"/></svg>
<svg class="a" style="left:704px;top:433px" width="10" height="10" viewBox="0 0 10 10"><path d="M1 3.5H3L5.5 1V9L3 6.5H1Z" fill="none" stroke="#ddd" stroke-width="0.8"/><path d="M7 3Q8 5 7 7M8.5 2Q10 5 8.5 8" stroke="#ddd" stroke-width="0.7" fill="none"/></svg>
<div class="a" style="left:718.5px;top:434.67px;font-size:7.5px;line-height:10px;color:#e8e8e8;white-space:nowrap;-webkit-text-stroke:0.15px #e8e8e8;transform:scaleX(0.769);transform-origin:0 0;">ENG</div>
<div class="a" style="left:740px;top:430.67px;font-size:7.5px;line-height:10px;color:#e8e8e8;white-space:nowrap;-webkit-text-stroke:0.15px #e8e8e8;transform:scaleX(0.830);transform-origin:0 0;">03:19 AM</div>
<div class="a" style="left:737px;top:439.37px;font-size:7.5px;line-height:10px;color:#e8e8e8;white-space:nowrap;-webkit-text-stroke:0.15px #e8e8e8;transform:scaleX(0.866);transform-origin:0 0;">07/04/2021</div>
<svg class="a" style="left:778px;top:433px" width="10" height="11" viewBox="0 0 10 11"><path d="M0.5 0.5H9.5V8H4L2 10V8H0.5Z" fill="none" stroke="#ddd" stroke-width="0.9"/></svg>
</body></html>
